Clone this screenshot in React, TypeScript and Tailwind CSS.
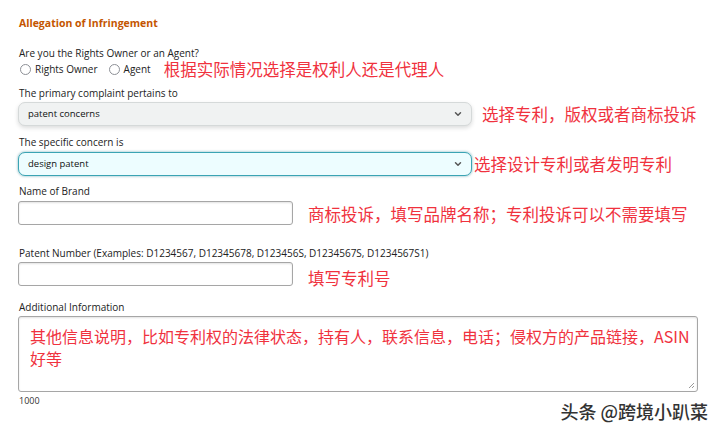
import { ChevronDown } from "lucide-react";

const label = "block text-[10px] leading-[12px] text-[#222222] [font-family:'Open_Sans',sans-serif]";
const note =
  "text-[16.5px] leading-[20px] text-[#f0323e] whitespace-nowrap [font-family:'Noto_Sans_CJK_SC',sans-serif]";

function Radio({ text }: { text: string }) {
  return (
    <span className="flex items-center gap-[4px]">
      <span className="w-[11px] h-[11px] rounded-full border border-[#8d9096] bg-white" />
      <span className="text-[10px] text-[#222222]">{text}</span>
    </span>
  );
}

function Select({ value, focused }: { value: string; focused?: boolean }) {
  return (
    <div
      className={
        "w-[454px] h-[24px] rounded-[7px] flex items-center justify-between pl-[9px] pr-[8px] text-[9.5px] text-[#0f1111] " +
        (focused
          ? "bg-[#edfdff] border border-[#3ba4b4] shadow-[0_0_2px_1px_rgba(0,113,133,0.25)]"
          : "bg-[#f0f2f2] border border-[#d5d9d9] shadow-[0_2px_4px_rgba(15,17,17,0.15)]")
      }
    >
      <span>{value}</span>
      <ChevronDown size={10} strokeWidth={3.5} className="text-[#555]" />
    </div>
  );
}

export default function App() {
  return (
    <div className="relative w-[720px] h-[432px] overflow-hidden bg-white pl-[18px] [font-family:'Open_Sans',sans-serif]">
      <h2 className="pt-[16px] pl-px text-[10.5px] leading-[14px] font-bold text-[#c45500]">
        Allegation of Infringement
      </h2>

      <span className={label + " mt-[17px] pl-px"}>Are you the Rights Owner or an Agent?</span>
      <div className="mt-[1px] h-[18px] flex items-center pl-[2px]">
        <Radio text="Rights Owner" />
        <span className="ml-[11px]">
          <Radio text="Agent" />
        </span>
        <span className={note + " ml-[13px]"}>根据实际情况选择是权利人还是代理人</span>
      </div>

      <span className={label + " mt-[9px] pl-px"}>The primary complaint pertains to</span>
      <div className="mt-[3px] flex items-center">
        <Select value="patent concerns" />
        <span className={note + " ml-[10px]"}>选择专利，版权或者商标投诉</span>
      </div>

      <span className={label + " mt-[10px] pl-px"}>The specific concern is</span>
      <div className="mt-[4px] flex items-center">
        <Select value="design patent" focused />
        <span className={note + " ml-[2px]"}>选择设计专利或者发明专利</span>
      </div>

      <span className={label + " mt-[9px] pl-px"}>Name of Brand</span>
      <div className="mt-[4px] flex items-center">
        <div className="w-[275px] h-[24px] rounded-[3px] border border-[#a6a6a6] bg-white shadow-[inset_0_1px_2px_rgba(15,17,17,0.12)]" />
        <span className={note + " ml-[15px] mt-[2px]"}>
          商标投诉，填写品牌名称；专利投诉可以不需要填写
        </span>
      </div>

      <span className={label + " mt-[22px] pl-px"}>
        Patent Number (Examples: D1234567, D12345678, D123456S, D1234567S, D1234567S1)
      </span>
      <div className="mt-[3px] flex items-start">
        <div className="w-[275px] h-[24px] rounded-[3px] border border-[#a6a6a6] bg-white shadow-[inset_0_1px_2px_rgba(15,17,17,0.12)]" />
        <span className={note + " ml-[15px] mt-[6px]"}>填写专利号</span>
      </div>

      <span className={label + " mt-[13px] pl-px"}>Additional Information</span>
      <div className="relative mt-[3px] w-[680px] h-[76px] rounded-[3px] border border-[#a6a6a6] bg-white shadow-[inset_0_1px_2px_rgba(15,17,17,0.12)] pl-[11px] pr-[4px] pt-[8px]">
        <p className="text-[16px] leading-[22px] text-[#f0323e] [font-family:'Noto_Sans_CJK_SC',sans-serif]">
          其他信息说明，比如专利权的法律状态，持有人，联系信息，电话；侵权方的产品链接，ASIN好等
        </p>
        <svg className="absolute right-[2px] bottom-[2px]" width="7" height="7" viewBox="0 0 7 7">
          <path d="M6 1L1 6M6 4L4 6" stroke="#9a9a9a" strokeWidth="1" />
        </svg>
      </div>
      <span className="block mt-[3px] pl-px text-[9px] leading-[12px] text-[#333]">1000</span>

      <span className="absolute right-[12px] bottom-[10px] text-[18px] leading-[22px] font-medium text-[#333] [font-family:'Noto_Sans_CJK_SC',sans-serif] [text-shadow:0_0_2px_#fff,0_0_2px_#fff]">
        头条 @跨境小趴菜
      </span>
    </div>
  );
}
